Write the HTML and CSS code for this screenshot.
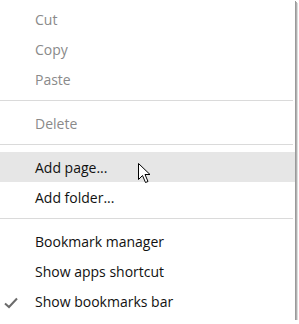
FILE: index.html
```html
<!DOCTYPE html>
<html lang="en">
<head>
  <meta charset="UTF-8">
  <title>Bookmark menu</title>
  <link rel="stylesheet" href="styles.css">
</head>
<body>

  <div class="menu">
    <div class="item disabled">Cut</div>
    <div class="item disabled">Copy</div>
    <div class="item disabled">Paste</div>
    <div class="sep"></div>
    <div class="item disabled">Delete</div>
    <div class="sep"></div>
    <div class="item hover">
      Add page...
      <!-- mouse pointer -->
      <svg class="cursor" width="13" height="21" viewBox="0 0 13 21">
        <path d="M0.5 0.5 L0.5 16.5 L4.5 12.5 L7.5 19.5 L10 18.5 L7 11.5 L12 11.5 Z" fill="#fff" stroke="#000" stroke-width="1" stroke-linejoin="miter"/>
      </svg>
    </div>
    <div class="item">Add folder...</div>
    <div class="sep"></div>
    <div class="item">Bookmark manager</div>
    <div class="item">Show apps shortcut</div>
    <div class="item checked">
      <svg class="check" width="14" height="12" viewBox="0 0 14 12">
        <path d="M1 6.5 L5 10 L13 1.5" fill="none" stroke="#6b6b6b" stroke-width="2"/>
      </svg>
      Show bookmarks bar
    </div>
  </div>

</body>
</html>
```

FILE: styles.css
```css
body {
  margin: 0;
  background: #fff;
  font-family: "Open Sans", "Noto Sans", sans-serif;
  font-size: 14px;
}

.menu {
  width: 295px;
  height: 316px;
  padding-top: 4px;
  background: #fff;
  box-shadow: 1px 1px 0 #9a9a9a, 2px 2px 0 #b0b0b0, 3px 3px 0 #dcdcdc;
}

.item {
  position: relative;
  height: 30px;
  line-height: 32px;
  padding-left: 35px;
  color: #111;
}

.disabled {
  color: #8a8a8a;
}

.hover {
  background: #e6e6e6;
}

.sep {
  height: 1px;
  margin: 6px 2px 7px 0;
  background: #dadada;
}

.cursor {
  position: absolute;
  left: 138px;
  top: 11px;
}

.check {
  position: absolute;
  left: 4px;
  top: 11px;
}
```
